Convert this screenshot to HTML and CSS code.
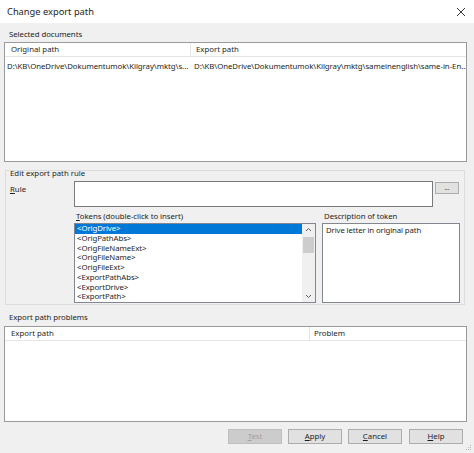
FILE: index.html
```html
<!DOCTYPE html>
<html>
<head>
<meta charset="utf-8">
<link rel="stylesheet" href="styles.css">
</head>
<body>
<div class="window">
  <div class="titlebar">
    <span class="title">Change export path</span>
    <svg class="close" width="10" height="10" viewBox="0 0 10 10"><path d="M1 1L9 9M9 1L1 9" stroke="#222" stroke-width="0.9" fill="none"/></svg>
  </div>
  <div class="body">
    <div class="section-label">Selected documents</div>
    <div class="listview lv-docs">
      <div class="lv-header">
        <div class="hcol hc1">Original path</div>
        <div class="hcol hc2">Export path</div>
      </div>
      <div class="lv-row">
        <div class="rcol rc1">D:\KB\OneDrive\Dokumentumok\Kilgray\mktg\s...</div>
        <div class="rcol rc2">D:\KB\OneDrive\Dokumentumok\Kilgray\mktg\sameinenglish\same-in-En...</div>
      </div>
    </div>

    <div class="groupbox">
      <div class="gb-title">Edit export path rule</div>
      <div class="rule-row">
        <div class="rule-label"><u>R</u>ule</div>
        <div class="textbox"></div>
        <div class="btn-small">...</div>
      </div>
      <div class="tokens-row">
        <div class="tokens-col">
          <div class="small-label tokens-label"><u>T</u>okens (double-click to insert)</div>
          <div class="listbox">
            <div class="items">
              <div class="item selected">&lt;OrigDrive&gt;</div>
              <div class="item">&lt;OrigPathAbs&gt;</div>
              <div class="item">&lt;OrigFileNameExt&gt;</div>
              <div class="item">&lt;OrigFileName&gt;</div>
              <div class="item">&lt;OrigFileExt&gt;</div>
              <div class="item">&lt;ExportPathAbs&gt;</div>
              <div class="item">&lt;ExportDrive&gt;</div>
              <div class="item">&lt;ExportPath&gt;</div>
            </div>
            <div class="scrollbar">
              <svg class="arrow" width="13" height="12" viewBox="0 0 13 12"><path d="M4 7L6.5 4.5L9 7" stroke="#606060" stroke-width="1" fill="none"/></svg>
              <div class="track"><div class="thumb"></div></div>
              <svg class="arrow" width="13" height="12" viewBox="0 0 13 12"><path d="M4 5L6.5 7.5L9 5" stroke="#606060" stroke-width="1" fill="none"/></svg>
            </div>
          </div>
        </div>
        <div class="desc-col">
          <div class="small-label desc-label">Description of token</div>
          <div class="descbox">Drive letter in original path</div>
        </div>
      </div>
    </div>

    <div class="section-label problems-label">Export path problems</div>
    <div class="listview lv-problems">
      <div class="lv-header">
        <div class="hcol pc1">Export path</div>
        <div class="hcol pc2">Problem</div>
      </div>
    </div>

    <div class="buttons">
      <div class="btn disabled"><u>T</u>est</div>
      <div class="btn"><u>A</u>pply</div>
      <div class="btn"><u>C</u>ancel</div>
      <div class="btn"><u>H</u>elp</div>
    </div>
  </div>
  <svg class="grip" width="6" height="6" viewBox="0 0 6 6">
    <rect x="4" y="0" width="1" height="1" fill="#b8b8b8"/>
    <rect x="2" y="2" width="1" height="1" fill="#b8b8b8"/>
    <rect x="4" y="2" width="1" height="1" fill="#b8b8b8"/>
    <rect x="0" y="4" width="1" height="1" fill="#b8b8b8"/>
    <rect x="2" y="4" width="1" height="1" fill="#b8b8b8"/>
    <rect x="4" y="4" width="1" height="1" fill="#b8b8b8"/>
  </svg>
</div>
</body>
</html>
```
FILE: styles.css
```css
* { box-sizing: border-box; }
html, body { margin: 0; padding: 0; }
body {
  width: 474px;
  height: 453px;
  overflow: hidden;
  font-family: "Noto Sans", "Open Sans", sans-serif;
  font-size: 7.8px;
  color: #1e1e1e;
  background: #f0f0f0;
}
u { text-decoration: underline; text-underline-offset: 1px; text-decoration-thickness: 0.6px; }

.window { position: relative; width: 474px; height: 453px; display: flex; flex-direction: column; }

.titlebar {
  height: 23px;
  background: #fff;
  display: flex;
  align-items: center;
  justify-content: space-between;
  padding: 0 8px 0 7px;
}
.title { font-size: 9.3px; line-height: 12px; margin-top: 1px; }
.close { display: block; }

.body {
  flex: 1;
  background: #f0f0f0;
  padding: 0 7px 0 4px;
  display: flex;
  flex-direction: column;
}

.section-label {
  padding: 5px 0 2px 5px;
  line-height: 12px;
  height: 19px;
  white-space: nowrap;
  letter-spacing: -0.05px;
}
.problems-label { padding-top: 6px; padding-bottom: 3px; height: 21px; }

.listview {
  background: #fff;
  border: 1px solid #9a9a9a;
  overflow: hidden;
}
.lv-docs { height: 120px; }
.lv-problems { height: 96px; }

.lv-header {
  display: flex;
  height: 14px;
  border-bottom: 1px solid #e5e5e5;
  line-height: 13px;
  white-space: nowrap;
}
.hcol { overflow: hidden; }
.hc1 { width: 186px; padding-left: 6px; border-right: 1px solid #e5e5e5; }
.hc2 { flex: 1; padding-left: 5px; }
.pc1 { width: 305px; padding-left: 6px; border-right: 1px solid #e5e5e5; }
.pc2 { flex: 1; padding-left: 4px; }

.lv-row { display: flex; padding-top: 2px; line-height: 14px; white-space: nowrap; letter-spacing: -0.05px; }
.rcol { overflow: hidden; }
.rc1 { width: 186px; padding-left: 2px; }
.rc2 { flex: 1; padding-left: 3px; }

.groupbox {
  margin: 8px 2px 0 1px;
  height: 135px;
  border: 1px solid #dcdcdc;
  padding-bottom: 1px;
  display: flex;
  flex-direction: column;
}
.gb-title {
  margin-top: -3px;
  line-height: 10px;
  padding-left: 4px;
  white-space: nowrap;
}
.rule-row {
  margin-top: 3px;
  display: flex;
  align-items: flex-start;
  padding-left: 4px;
}
.rule-label { width: 64px; padding-top: 2px; line-height: 12px; }
.textbox {
  width: 359px;
  height: 26px;
  background: #fff;
  border: 1px solid #7a7a7a;
}
.btn-small {
  margin-left: 2px;
  margin-top: 1px;
  width: 24px;
  height: 12px;
  background: #e1e1e1;
  border: 1px solid #adadad;
  color: #505050;
  font-size: 6.5px;
  line-height: 10px;
  text-align: center;
}

.tokens-row {
  display: flex;
  padding-left: 68px;
  gap: 6px;
}
.small-label {
  margin-top: 2px;
  height: 14px;
  line-height: 14px;
  white-space: nowrap;
  letter-spacing: -0.05px;
}
.tokens-label { padding-left: 2px; }
.desc-label { padding-left: 2px; }
.tokens-col { width: 242px; }
.desc-col { width: 138px; }

.listbox {
  height: 80px;
  background: #fff;
  border: 1px solid #828790;
  display: flex;
}
.items { width: 227px; }
.item {
  height: 9.75px;
  line-height: 9.75px;
  padding-left: 2px;
  white-space: nowrap;
  letter-spacing: -0.08px;
}
.item.selected { background: #0078d7; color: #fff; }

.scrollbar {
  width: 13px;
  background: #f0f0f0;
  display: flex;
  flex-direction: column;
}
.arrow { display: block; flex: none; }
.track { flex: 1; padding: 1px 1px 0 1px; }
.thumb { height: 16px; background: #cdcdcd; }

.descbox {
  height: 80px;
  background: #fff;
  border: 1px solid #828790;
  padding: 0 3px;
  line-height: 12px;
  white-space: nowrap;
  letter-spacing: -0.12px;
}

.buttons {
  margin-top: 7px;
  display: flex;
  justify-content: flex-end;
  gap: 6px;
  padding-right: 4px;
}
.btn {
  width: 54px;
  height: 15px;
  background: #e1e1e1;
  border: 1px solid #adadad;
  text-align: center;
  line-height: 13px;
}
.btn.disabled { background: #cccccc; border-color: #bfbfbf; color: #a0a0a0; }
.buttons .btn:nth-child(4) { margin-left: 1px; }

.grip { position: absolute; right: 2px; bottom: 2px; }
```
